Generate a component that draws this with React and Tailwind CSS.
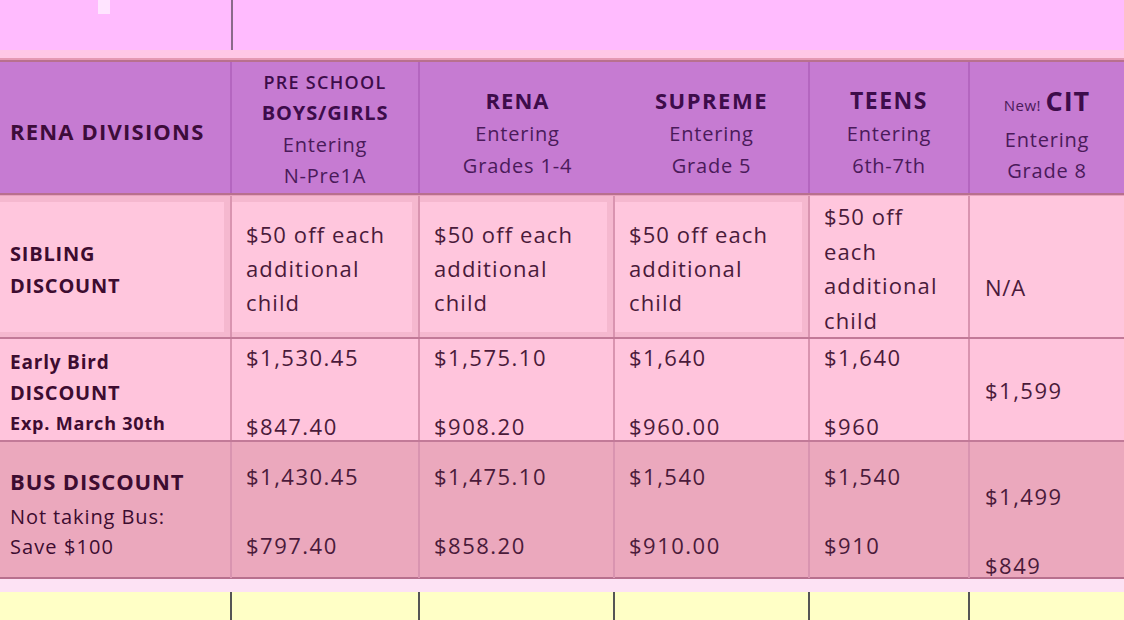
import React from 'react';

const cols = 'grid grid-cols-[232px_188px_195px_195px_160px_1fr]';
const font = { fontFamily: '"Open Sans", "Noto Sans", sans-serif' };

const Cell = ({ children, className = '' }) => (
  <div className={`border-r-2 border-[#d994b0] px-[14px] overflow-hidden ${className}`}>{children}</div>
);

// sibling row cells sit inset in a slightly darker pink frame
const Framed = ({ children, className = '', last = false, flat = false }) => (
  <div className={`${flat ? '' : 'pt-[6px] pb-[5px] pr-[6px]'} overflow-hidden ${last ? '' : 'border-r-2 border-[#d994b0]'}`}>
    <div className={`h-full bg-[#ffc6dd] ${className}`}>{children}</div>
  </div>
);

const Sibling = ({ lines, extra = 'pt-[15px] leading-[34px]', flat }) => (
  <Framed flat={flat} className={`${extra} pl-[14px] text-[22px] tracking-[1.1px] text-[#4a1a3a]`}>
    {lines.map((l, i) => (
      <div key={i}>{l}</div>
    ))}
  </Framed>
);

const Price = ({ a, b, pad }) => (
  <Cell className={`${pad} flex flex-col justify-between text-[22px] leading-[28px] tracking-[1.5px] text-[#4a1a3a]`}>
    <div>{a}</div>
    <div>{b}</div>
  </Cell>
);

const HeadCell = ({ children, border = true, pad = 'pt-[21px]' }) => (
  <div className={`flex flex-col items-center ${pad} text-center text-[#3d0c4a] ${border ? 'border-r-2 border-[#b466c0]' : ''}`}>
    {children}
  </div>
);

const Sub = ({ children, lh = 'leading-[34px]' }) => (
  <div className={`text-[20px] ${lh} tracking-[0.8px] text-[#4a1a5a]`}>{children}</div>
);

export default function App() {
  return (
    <div className="w-[1124px] h-[620px] overflow-hidden flex flex-col bg-[#ffbbfe]" style={font}>
      {/* top band */}
      <div className="h-[50px] flex shrink-0">
        <div className="w-[231px] relative">
          <div className="absolute left-[98px] top-0 w-[12px] h-[14px] bg-[#ffe4ff]" />
        </div>
        <div className="w-[2px] bg-[#8a6a8a]" />
        <div className="flex-1" />
      </div>
      <div className="h-[8px] bg-[#ffc8e6] shrink-0" />
      <div className="h-[4px] bg-[#e49ab4] border-b-2 border-[#b8708e] shrink-0" />

      {/* header */}
      <div className={`${cols} h-[131px] bg-[#c67bd2] shrink-0`}>
        <div className="flex items-center pl-[10px] pt-[8px] border-r-2 border-[#b466c0]">
          <span className="font-bold text-[22px] tracking-[1.2px] text-[#3d0c3a]">RENA DIVISIONS</span>
        </div>
        <HeadCell pad="pt-[5px]">
          <div className="text-[18px] leading-[30px] font-semibold tracking-[1.3px]">PRE SCHOOL</div>
          <div className="text-[20px] leading-[32px] font-bold tracking-[0.9px]">BOYS/GIRLS</div>
          <Sub lh="leading-[32px]">Entering</Sub>
          <Sub lh="leading-[30px]">N-Pre1A</Sub>
        </HeadCell>
        <HeadCell border={false}>
          <div className="text-[22px] leading-[34px] font-bold tracking-[1px]">RENA</div>
          <Sub>Entering</Sub>
          <Sub lh="leading-[30px]">Grades 1-4</Sub>
        </HeadCell>
        <HeadCell>
          <div className="text-[22px] leading-[34px] font-bold tracking-[1.5px]">SUPREME</div>
          <Sub>Entering</Sub>
          <Sub lh="leading-[30px]">Grade 5</Sub>
        </HeadCell>
        <HeadCell>
          <div className="text-[23px] leading-[34px] font-bold tracking-[1.5px]">TEENS</div>
          <Sub>Entering</Sub>
          <Sub lh="leading-[30px]">6th-7th</Sub>
        </HeadCell>
        <HeadCell border={false} pad="pt-[22px]">
          <div className="leading-[34px]">
            <span className="text-[15px] tracking-[0.5px] text-[#4a1a5a]">New! </span>
            <span className="text-[27px] font-bold tracking-[1px]">CIT</span>
          </div>
          <div className="mt-[1px]">
            <Sub>Entering</Sub>
          </div>
          <Sub lh="leading-[28px]">Grade 8</Sub>
        </HeadCell>
      </div>
      <div className="h-[3px] bg-[#e8a2bc] border-t-2 border-[#b8708e] shrink-0" />

      {/* sibling row */}
      <div className={`${cols} h-[143px] bg-[#f5b8cf] border-b-2 border-[#c27a98] shrink-0 overflow-hidden`}>
        <Framed className="pl-[10px] pt-[36px] text-[20px] font-bold leading-[32px] tracking-[0.8px] text-[#3d0c30]">
          <div>SIBLING</div>
          <div>DISCOUNT</div>
        </Framed>
        <Sibling lines={['$50 off each', 'additional', 'child']} />
        <Sibling lines={['$50 off each', 'additional', 'child']} />
        <Sibling lines={['$50 off each', 'additional', 'child']} />
        <Sibling flat lines={['$50 off', 'each', 'additional', 'child']} extra="pt-[3px] leading-[34.6px]" />
        <Framed last flat className="pl-[15px] pt-[74px] leading-[34px] text-[22px] tracking-[0.8px] text-[#4a1a3a]">
          N/A
        </Framed>
      </div>

      {/* early bird row */}
      <div className={`${cols} h-[103px] bg-[#ffc4dc] border-b-2 border-[#c27a98] shrink-0`}>
        <div className="pl-[10px] pt-[8px] border-r-2 border-[#d994b0] font-bold tracking-[0.8px] text-[#3d0c30]">
          <div className="text-[19px] leading-[30px]">Early Bird</div>
          <div className="text-[20px] leading-[32px]">DISCOUNT</div>
          <div className="text-[18px] leading-[28px]">Exp. March 30th</div>
        </div>
        <Price a="$1,530.45" b="$847.40" pad="pt-[4px] pb-[0px]" />
        <Price a="$1,575.10" b="$908.20" pad="pt-[4px] pb-[0px]" />
        <Price a="$1,640" b="$960.00" pad="pt-[4px] pb-[0px]" />
        <Price a="$1,640" b="$960" pad="pt-[4px] pb-[0px]" />
        <div className="pl-[15px] pt-[36px] leading-[30px] text-[22px] tracking-[1.5px] text-[#4a1a3a]">$1,599</div>
      </div>

      {/* bus row */}
      <div className={`${cols} h-[137px] bg-[#eba8bd] border-b-2 border-[#b8708e] shrink-0`}>
        <div className="pl-[10px] pt-[22px] border-r-2 border-[#d994b0] text-[#3d0c30]">
          <div className="text-[22px] leading-[34px] font-bold tracking-[0.9px]">BUS DISCOUNT</div>
          <div className="mt-[4px] text-[20px] leading-[30px] tracking-[0.9px]">Not taking Bus:</div>
          <div className="text-[20px] leading-[30px] tracking-[1.1px]">Save $100</div>
        </div>
        <Price a="$1,430.45" b="$797.40" pad="pt-[20px] pb-[19px]" />
        <Price a="$1,475.10" b="$858.20" pad="pt-[20px] pb-[19px]" />
        <Price a="$1,540" b="$910.00" pad="pt-[20px] pb-[19px]" />
        <Price a="$1,540" b="$910" pad="pt-[20px] pb-[19px]" />
        <div className="pl-[15px] pt-[41px] text-[22px] leading-[26px] tracking-[1.5px] text-[#4a1a3a]">
          <div>$1,499</div>
          <div className="mt-[43px]">$849</div>
        </div>
      </div>

      <div className="h-[13px] bg-[#fde2f4] shrink-0" />

      {/* bottom yellow */}
      <div className={`${cols} flex-1 bg-[#ffffc6]`}>
        <div className="border-r-2 border-[#555]" />
        <div className="border-r-2 border-[#555]" />
        <div className="border-r-2 border-[#555]" />
        <div className="border-r-2 border-[#555]" />
        <div className="border-r-2 border-[#555]" />
        <div />
      </div>
    </div>
  );
}
